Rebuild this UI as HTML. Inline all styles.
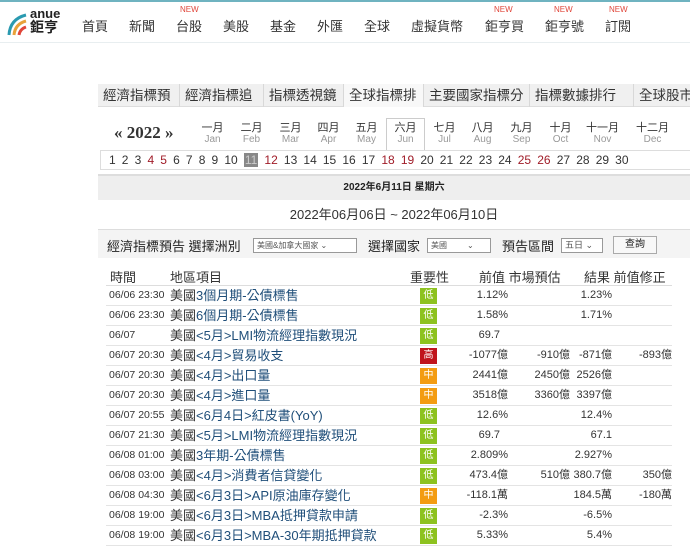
<!DOCTYPE html>
<html><head><meta charset="utf-8"><style>
*{margin:0;padding:0;box-sizing:border-box}
body{width:690px;height:543px;overflow:hidden;background:#fff;font-family:"Liberation Sans","Noto Sans CJK TC",sans-serif;color:#333;position:relative}
.a{position:absolute;white-space:nowrap}
.hdr{position:absolute;left:0;top:0;width:690px;height:43px;border-top:2px solid #6fb3c0;border-bottom:1px solid #e8eef0;background:#fff}
.nav{position:absolute;top:14px;font-size:13px;color:#333}
.new{position:absolute;top:3px;font-size:8px;color:#e0463a}
.tabs{position:absolute;left:98px;top:84px;height:23px;width:600px;background:#f0f0f0;border-bottom:1px solid #ddd}
.tab{position:absolute;top:0;height:23px;border-right:1px solid #d8d8d8;font-size:13.5px;line-height:23px;padding-left:5px;color:#333;overflow:hidden}
.mon{position:absolute;top:122px;width:39px;text-align:center;font-size:11px;color:#333;line-height:12px}
.mon span{display:block;color:#999;font-size:10px}
.days{position:absolute;left:100px;top:150px;width:590px;height:20px;border:1px solid #ddd;border-right:none;font-size:12px;word-spacing:2.8px;line-height:18px;padding-left:8px;color:#333}
.days b{font-weight:normal;color:#a01c28}
.days i{font-style:normal;background:#888;color:#ccc;padding:0 1px;word-spacing:0}
.row{position:absolute;left:106px;width:566px;height:20px;border-bottom:1px solid #e4e4e4;font-size:11px;line-height:19px}
.row .t{position:absolute;left:3px;color:#333;font-size:10.5px}
.row .n{position:absolute;left:64px;font-size:13px;color:#1f4e79}
.row .n em{font-style:normal;color:#333}
.bd{position:absolute;left:314px;top:2px;width:17px;height:16px;color:#fff;font-size:10px;line-height:16px;text-align:center}
.g{background:#8dc21f}.o{background:#f39c12}.r{background:#c0141c}
.c{position:absolute;text-align:right;color:#333}
.c1{right:164px}.c2{right:102px}.c3{right:60px}.c4{right:0}
</style></head><body>
<div class="hdr">
<svg class="a" style="left:6px;top:9px" width="26" height="26" viewBox="0 0 26 26"><path d="M3 24 Q4 8 20 4" stroke="#2a9ab0" stroke-width="3" fill="none"/><path d="M8 24 Q9 13 20 10" stroke="#e8a23a" stroke-width="3" fill="none"/><path d="M13 24 Q14 18 20 16" stroke="#e0463a" stroke-width="3" fill="none"/></svg>
<div class="a" style="left:30px;top:5px;font-size:13px;font-weight:bold;color:#222;line-height:13px">anue</div>
<div class="a" style="left:30px;top:18px;font-size:14px;font-weight:bold;color:#222;line-height:15px">鉅亨</div>
<div class="nav" style="left:82px">首頁</div>
<div class="nav" style="left:129px">新聞</div>
<div class="nav" style="left:176px">台股</div>
<div class="new" style="left:180px">NEW</div>
<div class="nav" style="left:223px">美股</div>
<div class="nav" style="left:270px">基金</div>
<div class="nav" style="left:317px">外匯</div>
<div class="nav" style="left:364px">全球</div>
<div class="nav" style="left:411px">虛擬貨幣</div>
<div class="new" style="left:494px">NEW</div><div class="nav" style="left:485px">鉅亨買</div>
<div class="new" style="left:554px">NEW</div><div class="nav" style="left:545px">鉅亨號</div>
<div class="new" style="left:609px">NEW</div><div class="nav" style="left:605px">訂閱</div>
</div>
<div class="tabs">
<div class="tab" style="left:0;width:82px">經濟指標預</div>
<div class="tab" style="left:82px;width:84px">經濟指標追</div>
<div class="tab" style="left:166px;width:80px">指標透視鏡</div>
<div class="tab" style="left:246px;width:80px;background:#f8f8f8">全球指標排</div>
<div class="tab" style="left:326px;width:106px">主要國家指標分</div>
<div class="tab" style="left:432px;width:104px">指標數據排行(年</div>
<div class="tab" style="left:536px;width:70px">全球股市</div>
</div>
<div class="a" style="left:114px;top:123px;font-family:'Liberation Serif',serif;font-size:17px;font-weight:bold;color:#333">« 2022 »</div>
<div class="a" style="left:386px;top:118px;width:39px;height:32px;border:1px solid #ccc;border-bottom:none;background:#fff"></div>
<div class="mon" style="left:193px">一月<span>Jan</span></div>
<div class="mon" style="left:232px">二月<span>Feb</span></div>
<div class="mon" style="left:271px">三月<span>Mar</span></div>
<div class="mon" style="left:309px">四月<span>Apr</span></div>
<div class="mon" style="left:347px">五月<span>May</span></div>
<div class="mon" style="left:386px">六月<span>Jun</span></div>
<div class="mon" style="left:425px">七月<span>Jul</span></div>
<div class="mon" style="left:463px">八月<span>Aug</span></div>
<div class="mon" style="left:502px">九月<span>Sep</span></div>
<div class="mon" style="left:541px">十月<span>Oct</span></div>
<div class="mon" style="left:583px">十一月<span>Nov</span></div>
<div class="mon" style="left:633px">十二月<span>Dec</span></div>
<div class="days">1 2 3 <b>4</b> <b>5</b> 6 7 8 9 10 <i>11</i> <b>12</b> 13 14 15 16 17 <b>18</b> <b>19</b> 20 21 22 23 24 <b>25</b> <b>26</b> 27 28 29 30</div>
<div class="a" style="left:98px;top:174px;width:592px;height:26px;background:#eee;border-top:2px solid #ddd;font-size:10px;font-weight:bold;line-height:24px;text-align:center;color:#222">2022年6月11日 星期六</div>
<div class="a" style="left:98px;top:200px;width:592px;height:30px;border-bottom:1px solid #ddd;font-size:13px;line-height:30px;text-align:center;color:#333">2022年06月06日 ~ 2022年06月10日</div>
<div class="a" style="left:98px;top:230px;width:592px;height:28px;background:#f4f4f4"></div>
<div class="a" style="left:107px;top:236px;font-size:13px;color:#222">經濟指標預告 選擇洲別</div>
<div class="a" style="left:253px;top:238px;width:104px;height:15px;border:1px solid #999;background:#fff;font-size:8px;line-height:13px;padding-left:3px;color:#555">美國&amp;加拿大國家 ⌄</div>
<div class="a" style="left:368px;top:236px;font-size:13px;color:#222">選擇國家</div>
<div class="a" style="left:427px;top:238px;width:64px;height:15px;border:1px solid #999;background:#fff;font-size:8px;line-height:13px;padding-left:3px;color:#555">美國 &nbsp;&nbsp;&nbsp;&nbsp;&nbsp;&nbsp;&nbsp; ⌄</div>
<div class="a" style="left:502px;top:236px;font-size:13px;color:#222">預告區間</div>
<div class="a" style="left:561px;top:238px;width:42px;height:15px;border:1px solid #999;background:#fff;font-size:9px;line-height:13px;padding-left:3px;color:#555">五日 ⌄</div>
<div class="a" style="left:613px;top:236px;width:44px;height:18px;border:1px solid #aaa;background:#f8f8f8;font-size:10px;line-height:16px;text-align:center;color:#222">查詢</div>
<div class="a" style="left:110px;top:267px;font-size:13px;color:#333">時間</div>
<div class="a" style="left:170px;top:267px;font-size:13px;color:#333">地區項目</div>
<div class="a" style="left:410px;top:267px;font-size:13px;color:#333">重要性</div>
<div class="a" style="left:479px;top:267px;font-size:13px;color:#333">前值 市場預估</div>
<div class="a" style="left:584px;top:267px;font-size:13px;color:#333">結果 前值修正</div>
<div class="a" style="left:106px;top:285px;width:566px;border-top:1px solid #ddd"></div>

<div class="row" style="top:286px"><span class="t">06/06 23:30</span><span class="n"><em>美國</em>3個月期-公債標售</span><span class="bd g">低</span><span class="c c1">1.12%</span><span class="c c3">1.23%</span></div>
<div class="row" style="top:306px"><span class="t">06/06 23:30</span><span class="n"><em>美國</em>6個月期-公債標售</span><span class="bd g">低</span><span class="c c1">1.58%</span><span class="c c3">1.71%</span></div>
<div class="row" style="top:326px"><span class="t">06/07</span><span class="n"><em>美國</em>&lt;5月&gt;LMI物流經理指數現況</span><span class="bd g">低</span><span class="c c1" style="right:172px">69.7</span></div>
<div class="row" style="top:346px"><span class="t">06/07 20:30</span><span class="n"><em>美國</em>&lt;4月&gt;貿易收支</span><span class="bd r">高</span><span class="c c1">-1077億</span><span class="c c2">-910億</span><span class="c c3">-871億</span><span class="c c4">-893億</span></div>
<div class="row" style="top:366px"><span class="t">06/07 20:30</span><span class="n"><em>美國</em>&lt;4月&gt;出口量</span><span class="bd o">中</span><span class="c c1">2441億</span><span class="c c2">2450億</span><span class="c c3">2526億</span></div>
<div class="row" style="top:386px"><span class="t">06/07 20:30</span><span class="n"><em>美國</em>&lt;4月&gt;進口量</span><span class="bd o">中</span><span class="c c1">3518億</span><span class="c c2">3360億</span><span class="c c3">3397億</span></div>
<div class="row" style="top:406px"><span class="t">06/07 20:55</span><span class="n"><em>美國</em>&lt;6月4日&gt;紅皮書(YoY)</span><span class="bd g">低</span><span class="c c1">12.6%</span><span class="c c3">12.4%</span></div>
<div class="row" style="top:426px"><span class="t">06/07 21:30</span><span class="n"><em>美國</em>&lt;5月&gt;LMI物流經理指數現況</span><span class="bd g">低</span><span class="c c1" style="right:172px">69.7</span><span class="c c3">67.1</span></div>
<div class="row" style="top:446px"><span class="t">06/08 01:00</span><span class="n"><em>美國</em>3年期-公債標售</span><span class="bd g">低</span><span class="c c1">2.809%</span><span class="c c3">2.927%</span></div>
<div class="row" style="top:466px"><span class="t">06/08 03:00</span><span class="n"><em>美國</em>&lt;4月&gt;消費者信貸變化</span><span class="bd g">低</span><span class="c c1">473.4億</span><span class="c c2">510億</span><span class="c c3">380.7億</span><span class="c c4">350億</span></div>
<div class="row" style="top:486px"><span class="t">06/08 04:30</span><span class="n"><em>美國</em>&lt;6月3日&gt;API原油庫存變化</span><span class="bd o">中</span><span class="c c1">-118.1萬</span><span class="c c3">184.5萬</span><span class="c c4">-180萬</span></div>
<div class="row" style="top:506px"><span class="t">06/08 19:00</span><span class="n"><em>美國</em>&lt;6月3日&gt;MBA抵押貸款申請</span><span class="bd g">低</span><span class="c c1">-2.3%</span><span class="c c3">-6.5%</span></div>
<div class="row" style="top:526px"><span class="t">06/08 19:00</span><span class="n"><em>美國</em>&lt;6月3日&gt;MBA-30年期抵押貸款</span><span class="bd g">低</span><span class="c c1">5.33%</span><span class="c c3">5.4%</span></div>
</body></html>
